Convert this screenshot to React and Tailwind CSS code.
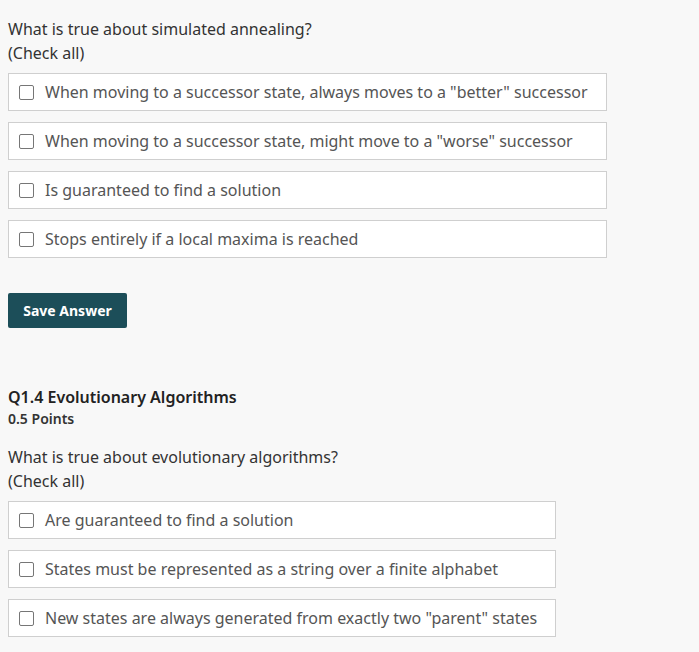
import React from "react";

function Option({ children }) {
  return (
    <label className="flex h-[38px] items-center border border-[#cfcfcf] bg-white pl-[10px] pr-[18px]">
      <span className="block h-[15px] w-[15px] shrink-0 rounded-[2px] border border-[#767676] bg-white" />
      <span className="ml-[11px] whitespace-nowrap text-[16px] leading-6 text-[#555555]">{children}</span>
    </label>
  );
}

function Question({ text, options }) {
  return (
    <div>
      <p className="text-[16px] leading-6 text-[#333333]">
        {text}
        <br />
        (Check all)
      </p>
      <div className="mt-2 inline-flex flex-col gap-[11px]">
        {options.map((o) => (
          <Option key={o}>{o}</Option>
        ))}
      </div>
    </div>
  );
}

export default function App() {
  return (
    <div
      className="min-h-[652px] bg-[#f8f8f8] px-2 pt-[17px]"
      style={{ fontFamily: '"Noto Sans", "Open Sans", sans-serif' }}
    >
      <Question
        text="What is true about simulated annealing?"
        options={[
          'When moving to a successor state, always moves to a "better" successor',
          'When moving to a successor state, might move to a "worse" successor',
          "Is guaranteed to find a solution",
          "Stops entirely if a local maxima is reached",
        ]}
      />
      <button className="mt-[35px] flex h-[35px] w-[119px] items-center justify-center rounded-[2px] bg-[#1c4e59] text-[14px] font-bold text-white">
        Save Answer
      </button>
      <h3 className="mt-[57px] text-[16px] font-semibold leading-6 text-[#222222]">Q1.4 Evolutionary Algorithms</h3>
      <div className="text-[14px] font-semibold leading-5 text-[#333333]">0.5 Points</div>
      <div className="mt-4">
        <Question
          text="What is true about evolutionary algorithms?"
          options={[
            "Are guaranteed to find a solution",
            "States must be represented as a string over a finite alphabet",
            'New states are always generated from exactly two "parent" states',
          ]}
        />
      </div>
    </div>
  );
}
